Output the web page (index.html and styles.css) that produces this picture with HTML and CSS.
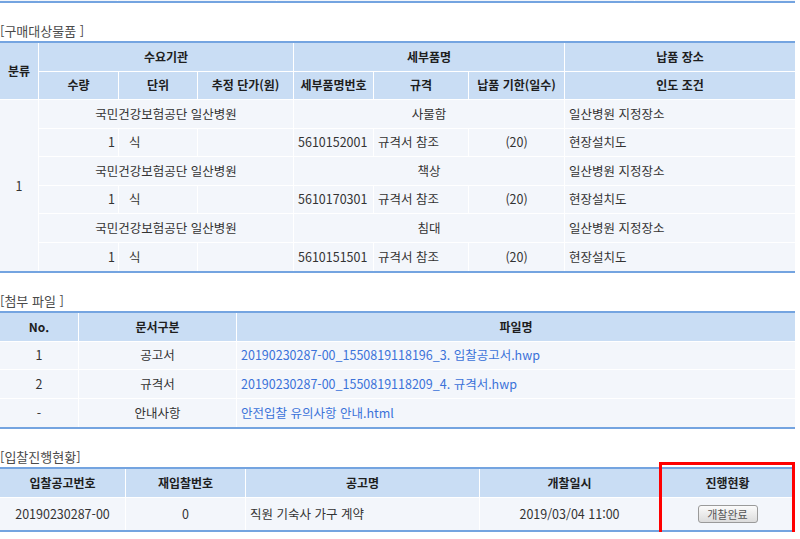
FILE: index.html
```html
<!DOCTYPE html>
<html lang="ko">
<head>
<meta charset="utf-8">
<title>입찰 상세</title>
<link rel="stylesheet" href="styles.css">
</head>
<body>
<div class="page">
  <table class="grid prev">
    <colgroup><col style="width:39px"><col style="width:79px"><col style="width:159px"><col style="width:358px"><col></colgroup>
    <tr><td></td><td></td><td></td><td></td><td></td></tr>
  </table>

  <div class="label">[구매대상물품 ]</div>
  <table class="grid t1">
    <colgroup>
      <col style="width:39px"><col style="width:80px"><col style="width:79px"><col style="width:96px">
      <col style="width:80px"><col style="width:95px"><col style="width:96px"><col>
    </colgroup>
    <thead>
      <tr>
        <th rowspan="2">분류</th>
        <th colspan="3">수요기관</th>
        <th colspan="3">세부품명</th>
        <th>납품 장소</th>
      </tr>
      <tr>
        <th>수량</th><th>단위</th><th>추정 단가(원)</th>
        <th>세부품명번호</th><th>규격</th><th>납품 기한(일수)</th><th>인도 조건</th>
      </tr>
    </thead>
    <tbody>
      <tr>
        <td rowspan="6" class="c last">1</td>
        <td colspan="3" class="c">국민건강보험공단 일산병원</td>
        <td colspan="3" class="c">사물함</td>
        <td class="l">일산병원 지정장소</td>
      </tr>
      <tr>
        <td class="r">1</td><td class="unit">식</td><td></td>
        <td class="l">5610152001</td><td class="l">규격서 참조</td><td class="c">(20)</td><td class="l">현장설치도</td>
      </tr>
      <tr>
        <td colspan="3" class="c">국민건강보험공단 일산병원</td>
        <td colspan="3" class="c">책상</td>
        <td class="l">일산병원 지정장소</td>
      </tr>
      <tr>
        <td class="r">1</td><td class="unit">식</td><td></td>
        <td class="l">5610170301</td><td class="l">규격서 참조</td><td class="c">(20)</td><td class="l">현장설치도</td>
      </tr>
      <tr>
        <td colspan="3" class="c">국민건강보험공단 일산병원</td>
        <td colspan="3" class="c">침대</td>
        <td class="l">일산병원 지정장소</td>
      </tr>
      <tr class="last">
        <td class="r">1</td><td class="unit">식</td><td></td>
        <td class="l">5610151501</td><td class="l">규격서 참조</td><td class="c">(20)</td><td class="l">현장설치도</td>
      </tr>
    </tbody>
  </table>

  <div class="label">[첨부 파일 ]</div>
  <table class="grid t2">
    <colgroup><col style="width:79px"><col style="width:158px"><col></colgroup>
    <thead>
      <tr><th>No.</th><th>문서구분</th><th>파일명</th></tr>
    </thead>
    <tbody>
      <tr><td class="c">1</td><td class="c">공고서</td><td class="l"><a href="#">20190230287-00_1550819118196_3. 입찰공고서.hwp</a></td></tr>
      <tr><td class="c">2</td><td class="c">규격서</td><td class="l"><a href="#">20190230287-00_1550819118209_4. 규격서.hwp</a></td></tr>
      <tr class="last"><td class="c">-</td><td class="c">안내사항</td><td class="l"><a href="#">안전입찰 유의사항 안내.html</a></td></tr>
    </tbody>
  </table>

  <div class="label">[입찰진행현황]</div>
  <div class="status-wrap">
    <table class="grid t3">
      <colgroup><col style="width:126px"><col style="width:120px"><col style="width:234px"><col style="width:180px"><col></colgroup>
      <thead>
        <tr><th>입찰공고번호</th><th>재입찰번호</th><th>공고명</th><th>개찰일시</th><th>진행현황</th></tr>
      </thead>
      <tbody>
        <tr class="last tall">
          <td class="c">20190230287-00</td>
          <td class="c">0</td>
          <td class="l">직원 기숙사 가구 계약</td>
          <td class="c">2019/03/04 11:00</td>
          <td class="c"><button type="button" class="btn">개찰완료</button></td>
        </tr>
      </tbody>
    </table>
    <div class="highlight"></div>
  </div>
</div>
</body>
</html>
```

FILE: styles.css
```css
html, body {
  margin: 0;
  padding: 0;
  background: #ffffff;
}

body {
  font-family: "Noto Sans CJK KR", "Noto Sans", sans-serif;
  font-size: 12px;
  color: #333333;
}

.page {
  width: 795px;
}

.grid {
  width: 795px;
  table-layout: fixed;
  border-collapse: separate;
  border-spacing: 0;
  border-top: 2px solid #74a4e0;
  border-bottom: 2px solid #74a4e0;
  background: #f3f6fb;
}

.grid th,
.grid td {
  height: 27.5px;
  padding: 0;
  border-right: 1px solid #ffffff;
  border-bottom: 1px solid #ffffff;
  line-height: 16px;
  vertical-align: middle;
  white-space: nowrap;
  overflow: hidden;
}

.grid td {
  font-size: 12.5px;
}

.grid th:last-child,
.grid td:last-child {
  border-right: none;
}

.grid tr.last td,
.grid td.last {
  border-bottom: none;
}

.grid tr.last > td {
  height: 28.5px;
}

.grid tr.tall > td {
  height: 32px;
}

.grid th {
  background: #c9ddf4;
  color: #1e1e1e;
  font-weight: bold;
  font-size: 12px;
  text-align: center;
}

.grid.prev {
  border-top: none;
}

.grid.prev td {
  height: 1px;
  border-bottom: none;
}

.c { text-align: center; }
.l { text-align: left; padding-left: 4px !important; }
.r { text-align: right; padding-right: 3px !important; }
.unit { text-align: left; padding-left: 10px !important; }

.label {
  margin-top: 20px;
  margin-bottom: 2px;
  height: 16px;
  line-height: 16px;
  color: #4a4a4a;
  font-size: 13px;
}

.grid a {
  color: #3b72d9;
  text-decoration: none;
}

.status-wrap {
  position: relative;
  width: 795px;
}

.btn {
  width: 60px;
  height: 18px;
  padding: 0;
  font-family: inherit;
  font-size: 11px;
  line-height: 14px;
  color: #555555;
  background: linear-gradient(#fbfbfb, #dcdcdc);
  border: 1px solid #9a9a9a;
  border-radius: 3px;
  vertical-align: middle;
}

.highlight {
  position: absolute;
  left: 659px;
  top: -5px;
  right: 0;
  bottom: -3px;
  border: 3px solid #ff0000;
  box-sizing: border-box;
  pointer-events: none;
}
```
